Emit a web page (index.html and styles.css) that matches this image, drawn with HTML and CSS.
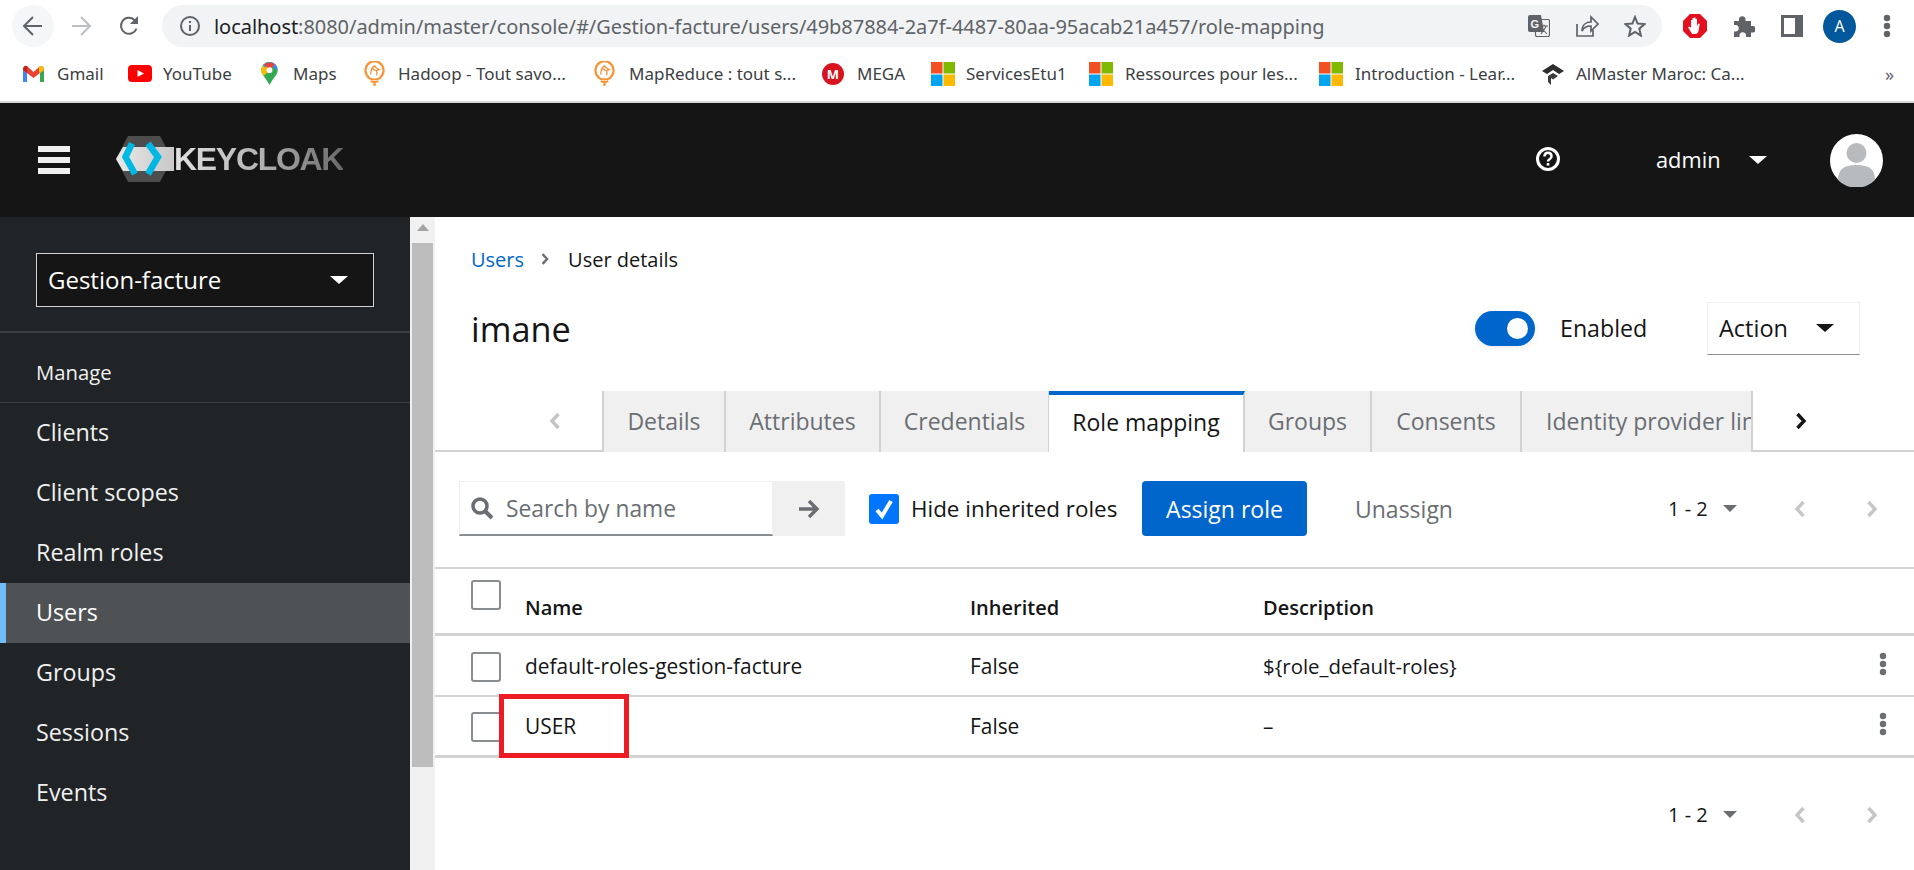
FILE: index.html
```html
<!DOCTYPE html>
<html lang="en">
<head>
<meta charset="utf-8">
<title>Keycloak - Role mapping</title>
<link rel="stylesheet" href="styles.css">
</head>
<body>
<svg class="defs" width="0" height="0" aria-hidden="true">
  <symbol id="ms" viewBox="0 0 24 24"><rect width="11.500" height="11.500" fill="#f25022"/><rect x="12.500" width="11.500" height="11.500" fill="#7fba00"/><rect y="12.500" width="11.500" height="11.500" fill="#00a4ef"/><rect x="12.500" y="12.500" width="11.500" height="11.500" fill="#ffb900"/></symbol>
  <symbol id="hd" viewBox="0 0 22 26"><path d="M5 17a9.500 9.500 0 1 1 12 0" fill="#fff" stroke="#f7953a" stroke-width="2.400"/><path d="M7 14c0-4 1-7 4-9 1 2 3 3 5 4l-3 1c1 2 1 3 0 5M9 8l3 2" fill="none" stroke="#f7953a" stroke-width="1.400"/><path d="M4 17c4 3 10 3 14 0M7 21c2.500 1.300 5.500 1.300 8 0" fill="none" stroke="#f7953a" stroke-width="2.200"/><circle cx="11" cy="24.500" r="1.500" fill="#f7953a"/></symbol>
  <symbol id="left" viewBox="0 0 12 20"><path d="M9.500 3 3 10l6.500 7" fill="none" stroke="currentColor" stroke-width="3.400"/></symbol>
  <symbol id="right" viewBox="0 0 12 20"><path d="M2.500 3 9 10l-6.500 7" fill="none" stroke="currentColor" stroke-width="3.400"/></symbol>
  <symbol id="kebab" viewBox="0 0 8 24"><circle cx="4" cy="4" r="3.200"/><circle cx="4" cy="12" r="3.200"/><circle cx="4" cy="20" r="3.200"/></symbol>
</svg>

<div class="toolbar-chrome">
  <span class="round-btn">
    <svg width="24" height="24" viewBox="0 0 24 24"><path d="M21 12H4M12 3l-9 9 9 9" fill="none" stroke="#5f6368" stroke-width="2"/></svg>
  </span>
  <svg class="chrome-fwd" width="24" height="24" viewBox="0 0 24 24"><path d="M3 12h17M12 3l9 9-9 9" fill="none" stroke="#bcbfc3" stroke-width="2"/></svg>
  <svg class="chrome-reload" width="24" height="24" viewBox="0 0 24 24"><path d="M19.500 14.500A8 8 0 1 1 17.500 6L20 8.500" fill="none" stroke="#5f6368" stroke-width="2"/><path d="M21 2v8h-8z" fill="#5f6368"/></svg>
  <div class="address">
    <svg class="addr-info" width="22" height="22" viewBox="0 0 22 22"><circle cx="11" cy="11" r="9" fill="none" stroke="#5f6368" stroke-width="2"/><path d="M11 10v6M11 6v2" stroke="#5f6368" stroke-width="2"/></svg>
    <span class="url"><span class="url-host">localhost</span>:8080/admin/master/console/#/Gestion-facture/users/49b87884-2a7f-4487-80aa-95acab21a457/role-mapping</span>
    <svg class="addr-icon addr-translate" width="22" height="22" viewBox="0 0 22 22"><rect x="7.500" y="4.500" width="14" height="17" rx="1.500" fill="#f1f3f4" stroke="#5f6368" stroke-width="1.200"/><path d="M2 0h11l3 17H2a2 2 0 0 1-2-2V2a2 2 0 0 1 2-2z" fill="#5f6368"/><text x="2.500" y="12.500" class="translate-g">G</text><path d="M12 11h8M16 9.500V11M13 19l5.500-8M14 13.500l5 5.500" fill="none" stroke="#5f6368" stroke-width="1.100"/></svg>
    <svg class="addr-icon addr-share" width="23" height="22" viewBox="0 0 23 22"><path d="M1 9v12h16v-6M6 16c0-6 4-9 9-9V2l7 7-7 7v-5c-4 0-7 1-9 5z" fill="none" stroke="#5f6368" stroke-width="1.700"/></svg>
    <svg class="addr-icon addr-star" width="22" height="22" viewBox="0 0 22 22"><path d="m11 2 2.600 6.500 7 .6-5.300 4.600 1.600 6.900L11 17l-5.900 3.600 1.600-6.900L1.400 9.100l7-.6z" fill="none" stroke="#5f6368" stroke-width="2"/></svg>
  </div>
  <div class="chrome-ext">
    <svg class="ext-block" width="24" height="24" viewBox="0 0 24 24"><path d="M7 0h10l7 7v10l-7 7H7l-7-7V7z" fill="#e4101f"/><path d="M8.500 19 5.500 14c-.5-1.200.8-1.800 1.600-1L8 14V6.500c0-1 1.400-1 1.500 0V11V4.500c0-1 1.500-1 1.500 0V11V4c0-1 1.500-1 1.500 0v7-5.500c0-1 1.500-1 1.500 0V12l1-2c.6-1 2-.5 1.600.5L15.500 17c-.5 2-1.500 3-3.500 3h-1.500c-1 0-1.500 0-2-1z" fill="#fff"/></svg>
    <svg class="ext-puzzle" width="22" height="22" viewBox="0 0 22 22"><path d="M1 6h5V4a3.300 3.300 0 0 1 6.500 0v2H18v5h2a3.300 3.300 0 0 1 0 6.500h-2V22h-5v-2a3.300 3.300 0 0 0-6.500 0v2H1v-5.500h2a3.300 3.300 0 0 0 0-6.500H1z" fill="#5f6368"/></svg>
    <svg class="ext-panel" width="22" height="22" viewBox="0 0 22 22"><path d="M1.500 1.500h19v19h-19z" fill="none" stroke="#5f6368" stroke-width="3"/><rect x="14" y="1" width="7" height="20" fill="#5f6368"/></svg>
    <span class="profile">A</span>
    <svg class="ext-menu" width="8" height="24" fill="#5f6368"><use href="#kebab"/></svg>
  </div>
</div>

<nav class="bookmarks">
  <span class="bm bm-gmail"><svg width="23" height="18" viewBox="0 0 23 18"><path d="M1 5v12h4V8z" fill="#4285f4"/><path d="M22 5v12h-4V8z" fill="#34a853"/><path d="M1 5c0-4 3-5 5-3l5.500 5L17 2c2-2 5-1 5 3l-10.500 8z" fill="#ea4335"/><path d="m18 8 4-3c0-4-3-5-5-3v5z" fill="#fbbc04"/><path d="M1 5c0-4 3-5 4.500-3.500L5 8z" fill="#c5221f"/></svg>Gmail</span>
  <span class="bm bm-yt"><svg width="24" height="17" viewBox="0 0 24 17"><rect width="24" height="17" rx="4" fill="#f00"/><path d="m9.500 5 6.500 3.500-6.500 3.500z" fill="#fff"/></svg>YouTube</span>
  <span class="bm bm-maps"><svg width="19" height="25" viewBox="0 0 19 26"><path d="M9.500 1A8.500 8.500 0 0 1 18 9.500c0 5-5 8-8.500 15.500C6 17.500 1 14.500 1 9.500A8.500 8.500 0 0 1 9.500 1z" fill="#34a853"/><path d="M2 5.500 15.500 3l-12 12.500C1 13 0 9 2 5.500z" fill="#fbbc04"/><path d="M3 4a8.500 8.500 0 0 1 7-3L5 7z" fill="#4285f4"/><path d="M10 1a8.500 8.500 0 0 1 8 8.500l-6-4z" fill="#4285f4"/><path d="M4 3.500a8.500 8.500 0 0 1 11 0L9.500 9z" fill="#ea4335"/><circle cx="9.500" cy="9.500" r="3" fill="#fff"/></svg>Maps</span>
  <span class="bm bm-hadoop"><svg width="21" height="25"><use href="#hd"/></svg>Hadoop - Tout savo...</span>
  <span class="bm bm-mr"><svg width="21" height="25"><use href="#hd"/></svg>MapReduce : tout s...</span>
  <span class="bm bm-mega"><span class="mega-badge">M</span>MEGA</span>
  <span class="bm bm-serv"><svg width="24" height="24"><use href="#ms"/></svg>ServicesEtu1</span>
  <span class="bm bm-res"><svg width="24" height="24"><use href="#ms"/></svg>Ressources pour les...</span>
  <span class="bm bm-intro"><svg width="24" height="24"><use href="#ms"/></svg>Introduction - Lear...</span>
  <span class="bm bm-al"><svg width="24" height="24" viewBox="0 0 24 24"><path d="M1 9 12 2l11 7-5 3-6-4-6 4z" fill="#2e2e2e"/><path d="M7 14l5-3 5 3-5 3.500-2-1.400V23l-3-3z" fill="#3c3c3c"/></svg>AlMaster Maroc: Ca...</span>
  <span class="bm-more">»</span>
</nav>

<header class="masthead">
  <span class="hamburger"><i></i><i></i><i></i></span>
  <div class="logo">
    <svg width="58" height="46" viewBox="0 0 58 46">
      <defs><linearGradient id="band" x1="0" x2="1" y1="0" y2="0"><stop offset="0" stop-color="#e8e8e8"/><stop offset="1" stop-color="#c8c8c8"/></linearGradient></defs>
      <path d="M12 0h32l12 23-12 23H12L0 23z" fill="#4d4d4d"/>
      <path d="M0 23 7 11h51v24H7z" fill="url(#band)"/>
      <path d="M16 7.500 9.500 21l9.500 17" fill="none" stroke="#00b8e3" stroke-width="6.500"/>
      <path d="M32 7.500 42 21l-10 17" fill="none" stroke="#00b8e3" stroke-width="6.500"/>
    </svg>
    <span class="logo-text">KEYCLOAK</span>
  </div>
  <div class="mast-right">
    <svg class="help" width="26" height="26" viewBox="0 0 26 26"><circle cx="13" cy="13" r="10.500" fill="none" stroke="#fff" stroke-width="3"/><path d="M9.500 10.500c0-5 7-5 7 0 0 2.500-3.500 2.500-3.500 5" fill="none" stroke="#fff" stroke-width="2.500"/><rect x="11.700" y="17" width="2.600" height="2.600" fill="#fff"/></svg>
    <span class="admin">admin</span>
    <span class="caret caret-white"></span>
    <svg class="avatar" width="53" height="53" viewBox="0 0 53 53"><circle cx="26.500" cy="26.500" r="26.500" fill="#fff"/><circle cx="26.500" cy="19" r="10" fill="#b8bbbe"/><path d="M8 46c0-10 5-15 18.500-15S45 36 45 46a26 26 0 0 1-37 0z" fill="#b8bbbe"/></svg>
  </div>
</header>

<div class="app">
  <aside class="sidebar">
    <div class="realm-wrap">
      <div class="realm"><span class="realm-name">Gestion-facture</span><span class="caret caret-white"></span></div>
    </div>
    <div class="nav-section">Manage</div>
    <ul class="nav">
      <li>Clients</li>
      <li>Client scopes</li>
      <li>Realm roles</li>
      <li class="current">Users</li>
      <li>Groups</li>
      <li>Sessions</li>
      <li>Events</li>
    </ul>
  </aside>
  <div class="scroll-track"><span class="scroll-up"></span><span class="scroll-thumb"></span></div>
  <main class="main">
    <div class="breadcrumb">
      <a class="crumb-link">Users</a>
      <svg width="10" height="14" class="crumb-sep"><use href="#right"/></svg>
      <span>User details</span>
    </div>
    <div class="title-row">
      <h1>imane</h1>
      <div class="title-actions">
        <span class="switch"><span class="knob"></span></span>
        <span class="switch-label">Enabled</span>
        <div class="action"><span>Action</span><span class="caret caret-dark"></span></div>
      </div>
    </div>
    <div class="tabs">
      <span class="tab-scroll tab-scroll-left"><svg width="12" height="20"><use href="#left"/></svg></span>
      <div class="tab-strip">
        <span class="tab">Details</span>
        <span class="tab">Attributes</span>
        <span class="tab">Credentials</span>
        <span class="tab active">Role mapping</span>
        <span class="tab">Groups</span>
        <span class="tab">Consents</span>
        <span class="tab tab-clip">Identity provider links</span>
      </div>
      <span class="tab-scroll tab-scroll-right"><svg width="12" height="20"><use href="#right"/></svg></span>
    </div>
    <div class="tools">
      <div class="search">
        <svg width="24" height="24" viewBox="0 0 24 24"><circle cx="10" cy="10" r="7" fill="none" stroke="#6a6e73" stroke-width="3.500"/><path d="m15 15 7 7" stroke="#6a6e73" stroke-width="4"/></svg>
        <span>Search by name</span>
      </div>
      <span class="search-go"><svg width="24" height="24" viewBox="0 0 24 24"><path d="M2 12h18M12 4l8 8-8 8" fill="none" stroke="#6a6e73" stroke-width="3.400"/></svg></span>
      <span class="check-on"><svg width="24" height="24" viewBox="0 0 24 24"><path d="m5 13 5 6L19 4" fill="none" stroke="#fff" stroke-width="4"/></svg></span>
      <span class="check-label">Hide inherited roles</span>
      <span class="btn-primary">Assign role</span>
      <span class="btn-link">Unassign</span>
      <div class="pager">
        <span class="pager-range">1 - 2</span><span class="caret caret-gray"></span>
        <svg class="pager-prev" width="12" height="20"><use href="#left"/></svg>
        <svg class="pager-next" width="12" height="20"><use href="#right"/></svg>
      </div>
    </div>
    <div class="row row-head">
      <span class="cell-check"><span class="check check-head"></span></span>
      <span>Name</span><span>Inherited</span><span>Description</span><span></span>
    </div>
    <div class="row">
      <span class="cell-check"><span class="check"></span></span>
      <span>default-roles-gestion-facture</span><span>False</span><span class="cell-desc">${role_default-roles}</span>
      <svg class="kebab" width="8" height="24"><use href="#kebab"/></svg>
    </div>
    <div class="row row-last">
      <span class="cell-check"><span class="check"></span></span>
      <span>USER</span><span>False</span><span>–</span>
      <svg class="kebab" width="8" height="24"><use href="#kebab"/></svg>
      <span class="annotation"></span>
    </div>
    <div class="foot">
      <div class="pager">
        <span class="pager-range">1 - 2</span><span class="caret caret-gray"></span>
        <svg class="pager-prev" width="12" height="20"><use href="#left"/></svg>
        <svg class="pager-next" width="12" height="20"><use href="#right"/></svg>
      </div>
    </div>
  </main>
</div>
</body>
</html>
```
FILE: styles.css
```css
* { box-sizing: border-box; }
html, body { margin: 0; height: 870px; overflow: hidden; }
body { font-family: "Open Sans", "Noto Sans", sans-serif; background: #fff; color: #151515; display: flex; flex-direction: column; }
.defs { position: absolute; }

/* browser chrome */
.toolbar-chrome { height: 50px; display: flex; align-items: center; padding: 2px 0 0 12px; flex: none; }
.round-btn { width: 42px; height: 42px; border-radius: 50%; background: #f5f6f7; display: flex; align-items: center; justify-content: center; flex: none; }
.chrome-fwd { margin-left: 15px; flex: none; }
.chrome-reload { margin-left: 24px; flex: none; }
.address { margin-left: 21px; width: 1500px; flex: none; height: 42px; border-radius: 21px; background: #f1f3f4; display: flex; align-items: center; padding-left: 17px; }
.addr-info { flex: none; }
.url { margin-left: 13px; font-family: "Noto Sans", sans-serif; font-size: 20px; color: #5f6368; white-space: nowrap; flex: none; width: 1108px; letter-spacing: -0.045px; }
.url-host { color: #202124; }
.addr-icon { flex: none; }
.addr-translate { margin-left: 206px; }
.addr-share { margin-left: 26px; }
.addr-star { margin-left: 25px; }
.translate-g { font-family: "Liberation Sans", sans-serif; font-weight: 700; font-size: 11px; fill: #f1f3f4; }
.chrome-ext { display: flex; align-items: center; margin-left: 21px; flex: none; }
.ext-puzzle { margin-left: 26px; }
.ext-panel { margin-left: 26px; }
.profile { width: 33px; height: 33px; margin-left: 20px; border-radius: 50%; background: #01579b; color: #fff; font-size: 16px; display: flex; align-items: center; justify-content: center; }
.ext-menu { margin-left: 27px; }

.bookmarks { height: 53px; flex: none; border-bottom: 2px solid #d9d9d9; display: flex; align-items: center; font-family: "Noto Sans", sans-serif; font-size: 17px; color: #3c4043; padding-bottom: 4px; padding-left: 22px; white-space: nowrap; }
.bm { display: flex; align-items: center; flex: none; gap: 12px; }
.bm-gmail { width: 106px; }
.bm-yt { width: 132px; gap: 11px; }
.bm-maps { width: 104px; gap: 14px; }
.bm-hadoop { width: 230px; gap: 13px; }
.bm-mr { width: 228px; gap: 14px; }
.bm-mega { width: 109px; gap: 13px; }
.bm-serv { width: 158px; gap: 11px; }
.bm-res { width: 230px; gap: 12px; }
.bm-intro { width: 222px; gap: 12px; }
.bm-al { width: 344px; gap: 11px; }
.mega-badge { width: 22px; height: 22px; border-radius: 50%; background: #d9121f; color: #fff; font-size: 13px; font-weight: 700; display: flex; align-items: center; justify-content: center; }
.bm-more { font-size: 18px; color: #5f6368; }

/* masthead */
.masthead { height: 114px; flex: none; background: #151515; display: flex; align-items: center; padding-left: 38px; }
.hamburger { width: 32px; height: 28px; margin-top: -1px; display: flex; flex-direction: column; justify-content: space-between; }
.hamburger i { display: block; height: 6px; background: #f0f0f0; }
.logo { margin-left: 46px; display: flex; align-items: center; height: 46px; margin-top: -2px; }
.logo-text { font-family: "Liberation Sans", sans-serif; font-weight: 700; font-size: 32px; letter-spacing: -1.300px; background: linear-gradient(90deg, #e2e2e2 0%, #b4b4b4 50%, #6a6a6a 100%); -webkit-background-clip: text; background-clip: text; color: transparent; }
.mast-right { margin-left: auto; display: flex; align-items: center; padding-right: 31px; }
.help { flex: none; margin-top: -2px; }
.admin { margin-left: 95px; width: 66px; color: #fff; font-size: 21.800px; white-space: nowrap; margin-top: -2px; }
.mast-right .caret { margin-left: 27px; }
.avatar { margin-left: 63px; }

.caret { display: inline-block; flex: none; width: 0; height: 0; border-left: 9px solid transparent; border-right: 9px solid transparent; border-top: 8px solid currentColor; }
.caret-white { color: #fff; }
.caret-dark { color: #151515; }
.caret-gray { color: #6a6e73; border-left-width: 7px; border-right-width: 7px; border-top-width: 7px; }

/* app */
.app { flex: 1; display: flex; min-height: 0; }
.sidebar { width: 410px; flex: none; background: #212427; color: #fff; }
.realm-wrap { height: 116px; padding: 36px 36px 0; border-bottom: 2px solid #3c3f42; }
.realm { height: 54px; background: #151515; border: 1px solid #d2d2d2; display: flex; align-items: center; justify-content: space-between; padding: 0 25px 0 11px; font-size: 24px; }
.realm-name { margin-top: -2px; }
.nav-section { height: 70px; border-bottom: 1px solid #3c3f42; padding: 9px 0 0 36px; display: flex; align-items: center; font-size: 20.300px; color: #f0f0f0; }
.nav { list-style: none; margin: 0; padding: 0; }
.nav li { height: 60px; display: flex; align-items: center; padding: 0 0 2px 36px; font-size: 23.300px; color: #f0f0f0; }
.nav li.current { background: #4f5255; border-left: 6px solid #73bcf7; padding-left: 30px; color: #fff; }

.scroll-track { width: 25px; flex: none; background: #f1f1f1; display: flex; flex-direction: column; align-items: center; }
.scroll-up { margin-top: 7px; width: 0; height: 0; border-left: 6px solid transparent; border-right: 6px solid transparent; border-bottom: 7px solid #a3a3a3; }
.scroll-thumb { margin-top: 12px; width: 21px; height: 524px; background: #bdbdbd; }

.main { flex: 1; min-width: 0; display: flex; flex-direction: column; font-size: 20px; }
.breadcrumb { margin-top: 24px; height: 36px; padding-left: 36px; display: flex; align-items: center; font-size: 20px; flex: none; }
.crumb-link { color: #06c; }
.crumb-sep { margin: 0 18px 0 16px; color: #6a6e73; }
.title-row { margin-top: 23px; height: 56px; padding: 0 54px 0 36px; display: flex; align-items: center; justify-content: space-between; flex: none; }
h1 { margin: 0; font-size: 34.300px; font-weight: 400; color: #151515; }
.title-actions { display: flex; align-items: center; }
.switch { width: 60px; height: 35px; border-radius: 18px; background: #06c; display: flex; align-items: center; justify-content: flex-end; padding-right: 7px; box-shadow: 0 2px 6px rgba(0,0,0,.08); }
.knob { width: 21px; height: 21px; border-radius: 50%; background: #fff; }
.switch-label { margin-left: 25px; font-size: 23.200px; width: 86px; }
.action { margin-left: 61px; width: 153px; height: 53px; border: 1px solid #f0f0f0; border-bottom-color: #8a8d90; display: flex; align-items: center; padding-left: 11px; font-size: 23.500px; }
.action .caret { margin-left: 28px; }

.tabs { margin-top: 35px; height: 61px; flex: none; display: flex; border-bottom: 2px solid #d2d2d2; }
.tab-scroll { display: flex; align-items: center; justify-content: center; }
.tab-scroll-left { width: 167px; color: #c2c4c6; padding-left: 72px; }
.tab-scroll-right { width: 96px; color: #151515; }
.tab-strip { display: grid; grid-template-columns: 122px 155px 169px 195px 127px 150px 231px; height: 61px; border-left: 2px solid #d2d2d2; }
.tab { background: #f0f0f0; border-right: 2px solid #d2d2d2; color: #6a6e73; display: flex; align-items: center; justify-content: center; font-size: 23px; white-space: nowrap; overflow: hidden; padding-bottom: 2px; }
.tab.active { background: #fff; color: #151515; border-top: 4px solid #06c; margin-left: -1px; height: 61px; padding-bottom: 4px; }
.tab-clip { justify-content: flex-start; padding-left: 24px; }

.tools { height: 117px; flex: none; display: flex; align-items: center; padding: 0 0 2px 24px; border-bottom: 2px solid #d2d2d2; }
.search { width: 314px; height: 55px; border: 1px solid #f0f0f0; border-bottom: 2px solid #8a8d90; display: flex; align-items: center; padding-left: 10px; gap: 12px; color: #6a6e73; font-size: 22.800px; }
.search-go { width: 72px; height: 55px; background: #f0f0f0; display: flex; align-items: center; justify-content: center; }
.check-on { margin-left: 24px; width: 30px; height: 30px; border-radius: 3px; background: #0075ff; display: flex; align-items: center; justify-content: center; }
.check-label { margin-left: 12px; width: 207px; font-size: 22.400px; white-space: nowrap; }
.btn-primary { margin-left: 24px; width: 165px; height: 55px; border-radius: 4px; background: #06c; color: #fff; display: flex; align-items: center; justify-content: center; font-size: 23px; }
.btn-link { margin-left: 48px; color: #6a6e73; font-size: 23px; }
.pager { margin-left: auto; display: flex; align-items: center; padding-right: 36px; }
.pager-range { font-size: 20px; width: 55px; white-space: nowrap; }
.pager-prev { margin-left: 57px; color: #c4c6c8; }
.pager-next { margin-left: 60px; color: #c4c6c8; }

.row { position: relative; display: grid; grid-template-columns: 90px 445px 293px 1fr 60px; align-items: center; height: 61px; border-bottom: 2px solid #d2d2d2; font-size: 20.900px; flex: none; }
.row-head { height: 67px; padding-top: 12px; border-bottom: 3px solid #d2d2d2; font-weight: 600; font-size: 20px; }
.row-last { border-bottom-width: 3px; }
.cell-check { display: flex; padding-left: 36px; }
.cell-desc { font-size: 20.400px; }
.check { width: 30px; height: 30px; margin-top: 2px; border: 2px solid #8a8d90; border-radius: 3px; background: #fff; }
.check-head { margin-top: -24px; }
.kebab { fill: #6a6e73; justify-self: start; margin: -4px 0 0 25px; }
.annotation { position: absolute; left: 64px; top: -3px; width: 130px; height: 64px; border: 5px solid #ed1c24; }
.foot { flex: 1; display: flex; align-items: flex-start; padding-top: 43px; }
```
